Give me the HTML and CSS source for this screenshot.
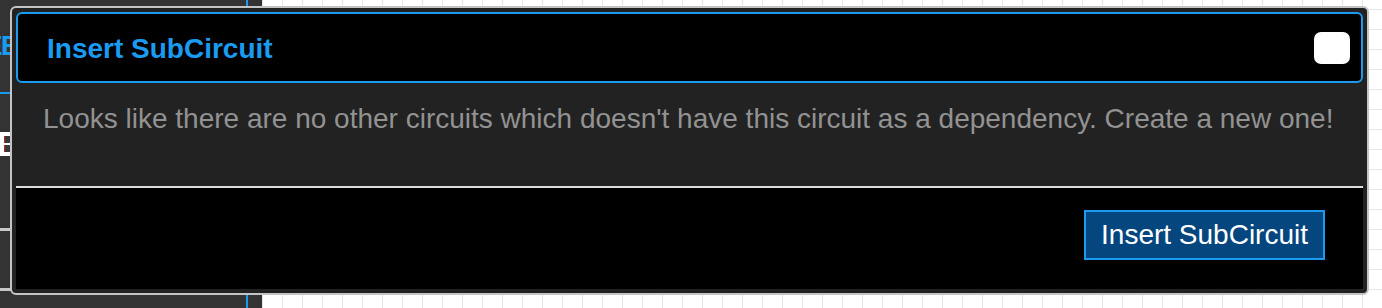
FILE: index.html
```html
<!DOCTYPE html>
<html>
<head>
<meta charset="utf-8">
<link rel="stylesheet" href="styles.css">
</head>
<body>
<div class="app">
  <aside class="panel">
    <div class="panel-title">EE</div>
    <div class="panel-rule"></div>
    <div class="panel-chip">
      <span class="chip-notch"></span>
      <span class="chip-notch"></span>
    </div>
    <div class="panel-line panel-line-a"></div>
    <div class="panel-line panel-line-b"></div>
    <div class="panel-edge"></div>
  </aside>
  <main class="canvas"></main>
</div>

<div class="dialog">
  <div class="dialog-header">
    <h2 class="dialog-title">Insert SubCircuit</h2>
    <button class="dialog-close" aria-label="Close"></button>
  </div>
  <div class="dialog-body">
    Looks like there are no other circuits which doesn't have this circuit as a dependency. Create a new one!
  </div>
  <div class="dialog-footer">
    <button class="dialog-action">Insert SubCircuit</button>
  </div>
</div>
</body>
</html>
```

FILE: styles.css
```css
* { box-sizing: border-box; }

html, body {
  margin: 0;
  padding: 0;
  width: 1382px;
  height: 308px;
  overflow: hidden;
  font-family: "Liberation Sans", Arial, sans-serif;
}

.app {
  display: flex;
  width: 1382px;
  height: 308px;
}

.panel {
  position: relative;
  width: 262px;
  flex: none;
  background: #333333;
  overflow: hidden;
}

.panel-title {
  position: absolute;
  left: -16px;
  top: 30px;
  color: #1a9bf0;
  font-weight: bold;
  font-size: 28px;
  line-height: 32px;
  letter-spacing: -2px;
}

.panel-rule {
  position: absolute;
  left: 0;
  top: 92px;
  width: 12px;
  height: 2px;
  background: #1a9bf0;
}

.panel-chip {
  position: absolute;
  left: 0;
  top: 132px;
  width: 12px;
  height: 24px;
  background: #ffffff;
  display: flex;
  flex-direction: column;
  justify-content: center;
  gap: 2px;
  padding-left: 4px;
}

.chip-notch {
  display: block;
  height: 7px;
  background: #3a3a3a;
  border-left: 1px solid #b02a2a;
}

.panel-line {
  position: absolute;
  left: 0;
  width: 262px;
  height: 3px;
  background: #c8c8c8;
}
.panel-line-a { top: 228px; }
.panel-line-b { top: 288px; }

.panel-edge {
  position: absolute;
  left: 246px;
  top: 0;
  width: 2px;
  height: 308px;
  background: #1a9bf0;
}

.canvas {
  flex: 1;
  background-color: #ffffff;
  background-image:
    linear-gradient(to right, #e6e6e6 1px, transparent 1px),
    linear-gradient(to bottom, #e6e6e6 1px, transparent 1px);
  background-size: 20px 20px;
  background-position: 0 0, 0 9px;
}

.dialog {
  position: absolute;
  left: 10px;
  top: 6px;
  width: 1359px;
  height: 289px;
  background: #222222;
  border: 2px solid #c4c4c4;
  border-radius: 6px;
  padding: 4px;
  display: flex;
  flex-direction: column;
}

.dialog-header {
  height: 71px;
  flex: none;
  background: #000000;
  border: 2px solid #1a9bf0;
  border-radius: 6px;
  display: flex;
  align-items: center;
  justify-content: space-between;
  padding: 0 11px 0 29px;
}

.dialog-title {
  margin: 0;
  color: #1a9bf0;
  font-size: 28px;
  font-weight: bold;
  line-height: 32px;
  position: relative;
  top: 1px;
}

.dialog-close {
  width: 36px;
  height: 32px;
  border: none;
  border-radius: 7px;
  background: #ffffff;
  padding: 0;
}

.dialog-body {
  height: 105px;
  flex: none;
  padding: 20px 27px 0 27px;
  color: #929292;
  font-size: 28px;
  line-height: 32px;
  white-space: nowrap;
  border-bottom: 2px solid #dcdcdc;
}

.dialog-footer {
  flex: 1;
  background: #000000;
  display: flex;
  justify-content: flex-end;
  align-items: flex-start;
  padding: 22px 38px 0 0;
}

.dialog-action {
  height: 50px;
  padding: 0 15px;
  background: #05467f;
  border: 2px solid #1a9bf0;
  border-radius: 0;
  color: #ffffff;
  font-family: "Liberation Sans", Arial, sans-serif;
  font-size: 28px;
  line-height: 32px;
}
```
